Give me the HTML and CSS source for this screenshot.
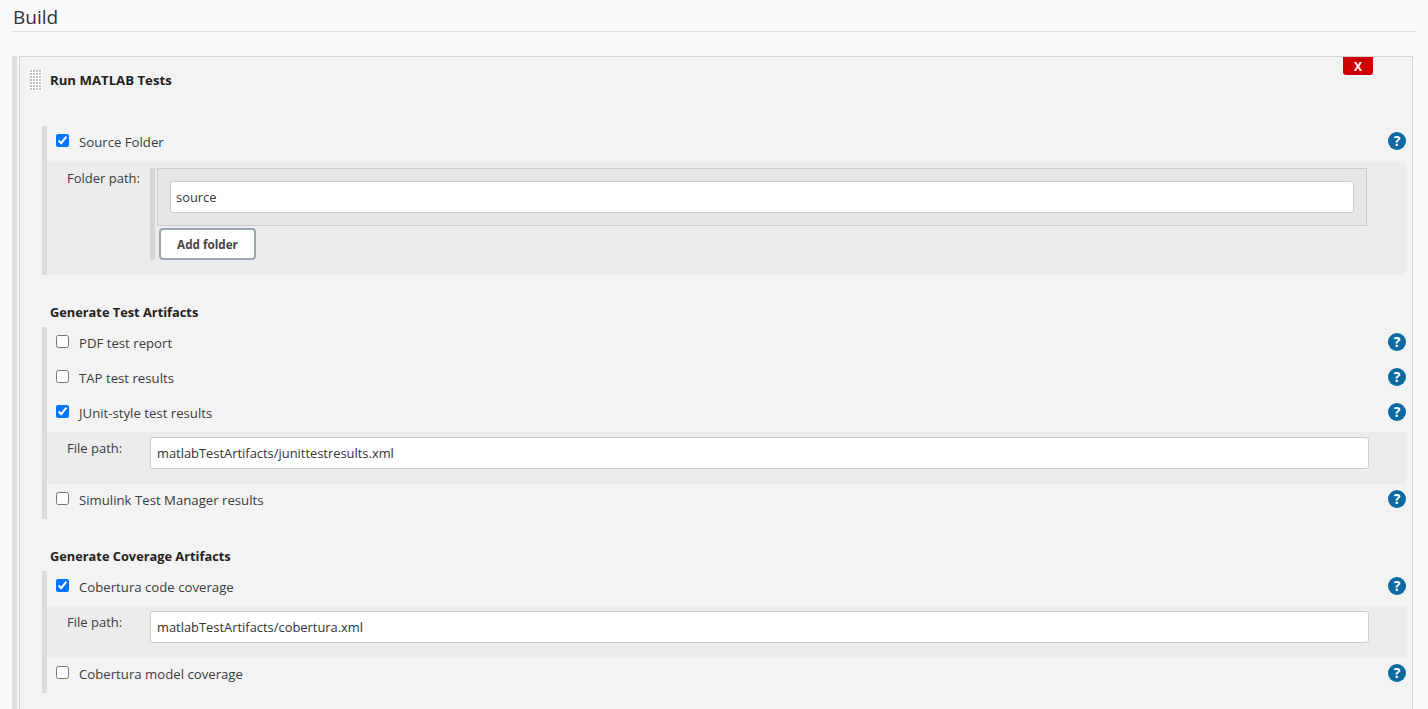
FILE: index.html
```html
<!DOCTYPE html>
<html lang="en">
<head>
    <meta charset="UTF-8">
    <title>Build</title>
    <link rel="stylesheet" href="styles.css">
</head>
<body>
    <div class="section-header">Build</div>
    <div class="step-wrap">
        <div class="step">
            <div class="step-head">
                <span class="handle"></span>
                <b>Run MATLAB Tests</b>
                <button class="btn-delete">X</button>
            </div>

            <div class="group group-source">
                <div class="check-row">
                    <input type="checkbox" checked>
                    <label>Source Folder</label>
                    <a class="help">?</a>
                </div>
                <div class="sub sub-source">
                    <span class="field-label">Folder path:</span>
                    <div class="repeat">
                        <div class="repeat-box">
                            <input class="text-input" type="text" value="source">
                        </div>
                        <button class="btn-add">Add folder</button>
                    </div>
                </div>
            </div>

            <h4 class="group-title title-test">Generate Test Artifacts</h4>
            <div class="group">
                <div class="check-row">
                    <input type="checkbox">
                    <label>PDF test report</label>
                    <a class="help">?</a>
                </div>
                <div class="check-row">
                    <input type="checkbox">
                    <label>TAP test results</label>
                    <a class="help">?</a>
                </div>
                <div class="check-row">
                    <input type="checkbox" checked>
                    <label>JUnit-style test results</label>
                    <a class="help">?</a>
                </div>
                <div class="sub sub-file">
                    <span class="field-label">File path:</span>
                    <input class="text-input" type="text" value="matlabTestArtifacts/junittestresults.xml">
                </div>
                <div class="check-row">
                    <input type="checkbox">
                    <label>Simulink Test Manager results</label>
                    <a class="help">?</a>
                </div>
            </div>

            <h4 class="group-title title-coverage">Generate Coverage Artifacts</h4>
            <div class="group">
                <div class="check-row">
                    <input type="checkbox" checked>
                    <label>Cobertura code coverage</label>
                    <a class="help">?</a>
                </div>
                <div class="sub sub-file">
                    <span class="field-label">File path:</span>
                    <input class="text-input" type="text" value="matlabTestArtifacts/cobertura.xml">
                </div>
                <div class="check-row">
                    <input type="checkbox">
                    <label>Cobertura model coverage</label>
                    <a class="help">?</a>
                </div>
            </div>
        </div>
    </div>
</body>
</html>
```

FILE: styles.css
```css
html {
    overflow: hidden;
}
body {
    font-family: "Open Sans", "Noto Sans", sans-serif;
    font-size: 13.2px;
    margin: 0;
    padding: 0 12px;
    background: #f9f9f9;
    color: #333;
}
.section-header {
    font-size: 19px;
    line-height: 24px;
    height: 26px;
    padding-top: 5px;
    border-bottom: 1px solid #ddd;
    text-indent: 1px;
    color: #333;
}
.step-wrap {
    margin-top: 24px;
    border-left: 5px solid #e0e0e0;
    padding-left: 2px;
    margin-right: 3px;
}
.step {
    background: #f3f3f3;
    border: 1px solid #d3d3d3;
    border-bottom: 0;
    padding: 0 6px 16px 22px;
    position: relative;
}
.step-head {
    height: 69px;
    display: flex;
    align-items: center;
    padding-bottom: 23px;
    box-sizing: border-box;
    margin-left: -12px;
    color: #222;
    font-size: 13.2px;
}
.handle {
    width: 12px;
    height: 21px;
    margin-right: 8px;
    background-color: #c4c4c4;
    background-image: linear-gradient(to right, transparent 2px, #fff 2px), linear-gradient(to bottom, transparent 2px, #fff 2px);
    background-size: 3px 3px;
}
.btn-delete {
    position: absolute;
    top: 0;
    right: 39px;
    width: 30px;
    height: 18px;
    padding: 0;
    border: 0;
    border-radius: 0 0 3px 3px;
    background: #cc0000;
    color: #fff;
    font-family: "Open Sans", sans-serif;
    font-size: 12px;
    font-weight: 700;
}
.group {
    border-left: 5px solid #dcdcdc;
}
.group-source {
    height: 149px;
}
.check-row {
    height: 35px;
    display: flex;
    align-items: center;
    padding: 0 0 4px 9px;
    box-sizing: border-box;
    position: relative;
}
.check-row input {
    width: 13px;
    height: 13px;
    margin: 0 10px 3px 0;
    accent-color: #0075ff;
}
.check-row label {
    color: #3c3c3c;
}
.help {
    position: absolute;
    right: 0;
    top: 6px;
    width: 18px;
    height: 18px;
    border-radius: 50%;
    background: #0b6aa2;
    color: #fff;
    font-weight: 700;
    font-size: 14px;
    line-height: 18px;
    text-align: center;
}
.sub {
    background: #ececec;
    display: flex;
}
.sub-source {
    height: 114px;
    padding-top: 7px;
    box-sizing: border-box;
}
.sub-file {
    height: 52px;
    padding-top: 5px;
    box-sizing: border-box;
}
.sub-file .field-label {
    padding-top: 1px;
}
.field-label {
    width: 103px;
    padding-left: 20px;
    box-sizing: border-box;
    color: #3c3c3c;
    font-size: 13px;
    line-height: 20px;
}
.repeat {
    border-left: 5px solid #d5d5d5;
    padding-left: 2px;
    width: 1210px;
    height: 92px;
}
.repeat-box {
    background: #e6e6e6;
    border: 1px solid #ccc;
    padding: 12px 12px 0;
    box-sizing: border-box;
    height: 58px;
}
.text-input {
    display: block;
    width: 1219px;
    height: 32px;
    box-sizing: border-box;
    border: 1px solid #ccc;
    border-radius: 3px;
    background: #fff;
    padding: 0 6px;
    font: inherit;
    font-size: 12.9px;
    color: #333;
}
.repeat-box .text-input {
    width: 1184px;
    padding: 0 5px;
}
.btn-add {
    display: block;
    margin: 2px 0 0 2px;
    width: 97px;
    height: 32px;
    background: #fff;
    border: 2px solid #9aa7b3;
    border-radius: 4px;
    color: #444;
    font: 700 11.7px "Open Sans", sans-serif;
}
.group-title {
    margin: 0;
    padding-left: 8px;
    font-size: 12.8px;
    font-weight: 700;
    color: #222;
    line-height: 18px;
}
.title-test {
    padding-top: 28px;
    padding-bottom: 6px;
}
.title-coverage {
    padding-top: 28px;
    padding-bottom: 6px;
}
```
